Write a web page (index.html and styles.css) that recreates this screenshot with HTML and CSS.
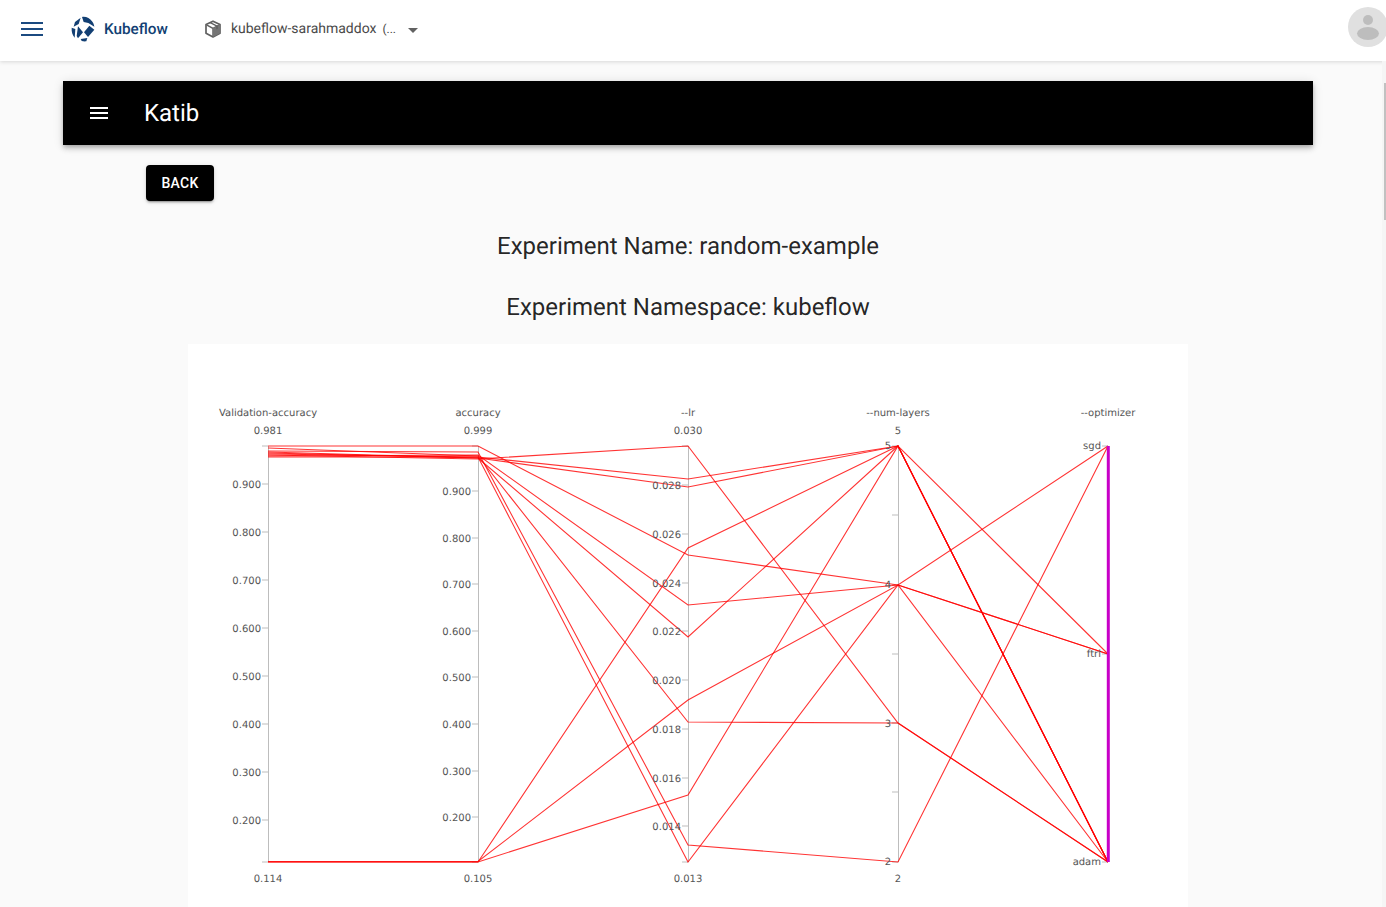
FILE: index.html
```html
<!DOCTYPE html>
<html lang="en">

<head>
    <meta charset="UTF-8">
    <title>Katib</title>
    <link rel="stylesheet" href="styles.css">
</head>

<body>
    <header class="topbar">
        <svg class="menuIcon" width="22" height="16" viewBox="0 0 22 16">
            <path d="M0 1h22v2H0zM0 7h22v2H0zM0 13h22v2H0z" fill="#1b4a80"/>
        </svg>
        <div class="brand">
            <svg class="logo" width="30" height="30" viewBox="0 0 90 90">
                <path d="M21 24L38 11 32 30 17 38z" fill="#123f73"/>
                <path d="M42 9C54 7 66 13 72 22 76 27 78 32 79 38L61 27 47 24z" fill="#123f73"/>
                <path d="M11 41L22 45 20 71C13 63 10 52 11 41z" fill="#123f73"/>
                <path d="M30 37L45 55 30 73 26 66z" fill="#123f73"/>
                <path d="M48 55L64 35 79 47 60 69z" fill="#123f73"/>
                <path d="M38 75L58 72 55 82C50 83 45 82 41 81z" fill="#123f73"/>
            </svg>
            <span class="brandName">Kubeflow</span>
        </div>
        <div class="namespace">
            <svg class="boxIcon" width="18" height="18" viewBox="0 0 18 18">
                <path d="M9 1.200l7 3.200v8.800l-7 3.800-7-3.800V4.400z" fill="#fff" stroke="#616161" stroke-width="1.700" stroke-linejoin="round"/>
                <path d="M2.500 4.900L9 8.300l6.500-3.400M9 8.300v8" fill="none" stroke="#616161" stroke-width="1.500"/>
                <path d="M9 8.300l7-3.900v8.800l-7 3.800z" fill="#757575"/>
                <path d="M5.500 3l6.800 3.600v3l1.500-.8V5.800L7 2.300z" fill="#616161"/>
            </svg>
            <span class="nsName">kubeflow-sarahmaddox</span>
            <span class="nsOwner">(...</span>
            <span class="caret"></span>
        </div>
        <div class="avatar">
            <span class="avatarHead"></span>
            <span class="avatarBody"></span>
        </div>
    </header>

    <main class="page">
        <div class="katibBar">
            <svg class="katibMenu" width="18" height="12" viewBox="0 0 18 12">
                <path d="M0 0h18v2H0zM0 5h18v2H0zM0 10h18v2H0z" fill="#fff"/>
            </svg>
            <span class="katibTitle">Katib</span>
        </div>
        <button class="backBtn">BACK</button>
        <h5 class="expTitle">Experiment Name: random-example</h5>
        <h5 class="expTitle">Experiment Namespace: kubeflow</h5>

        <section class="chartBox">
            <svg class="chart" width="1000" height="563" viewBox="188 344 1000 563">
                <!-- axes -->
                <g class="axis">
                    <path d="M268.500 446V862M478.500 446V862M688.500 446V862M898.500 446V862"/>
                    <path d="M262 446h6M262 484h6M262 532h6M262 580h6M262 628h6M262 676h6M262 724h6M262 772h6M262 820h6M262 862h6"/>
                    <path d="M472 446h6M472 491h6M472 538h6M472 584h6M472 631h6M472 677h6M472 724h6M472 771h6M472 817h6M472 862h6"/>
                    <path d="M682 446h6M682 485h6M682 534h6M682 583h6M682 631h6M682 680h6M682 729h6M682 778h6M682 826h6M682 862h6"/>
                    <path d="M892 446h6M892 515h6M892 585h6M892 654h6M892 723h6M892 792h6M892 862h6"/>
                    <path d="M1102 446h6M1102 654h6M1102 862h6"/>
                </g>

                <!-- trials -->
                <g class="trials">
                    <polyline points="268,455 478,459 688,446 898,723 1108,862"/>
                    <polyline points="268,457 478,457 688,479 898,446 1108,654"/>
                    <polyline points="268,453 478,458 688,487 898,446 1108,862"/>
                    <polyline points="268,446 478,446 688,555 898,585 1108,654"/>
                    <polyline points="268,456 478,455 688,605 898,585 1108,446"/>
                    <polyline points="268,452 478,458 688,637 898,446 1108,862"/>
                    <polyline points="268,448 478,456 688,722 898,723 1108,862"/>
                    <polyline points="268,451 478,452 688,845 898,862 1108,446"/>
                    <polyline points="268,454 478,457 688,862 898,585 1108,862"/>
                    <polyline points="268,862 478,862 688,548 898,446 1108,862"/>
                    <polyline points="268,861.500 478,861.500 688,700 898,585 1108,654"/>
                    <polyline points="268,862 478,862 688,795 898,446 1108,862"/>
                </g>
                <line class="highlight" x1="1108.300" y1="446" x2="1108.300" y2="862"/>

                <!-- axis titles and ranges -->
                <g class="axisText middle">
                    <text x="268" y="416">Validation-accuracy</text>
                    <text x="478" y="416">accuracy</text>
                    <text x="688" y="416">--lr</text>
                    <text x="898" y="416">--num-layers</text>
                    <text x="1108" y="416">--optimizer</text>
                    <text x="268" y="434">0.981</text>
                    <text x="478" y="434">0.999</text>
                    <text x="688" y="434">0.030</text>
                    <text x="898" y="434">5</text>
                    <text x="268" y="882">0.114</text>
                    <text x="478" y="882">0.105</text>
                    <text x="688" y="882">0.013</text>
                    <text x="898" y="882">2</text>
                </g>

                <!-- tick labels -->
                <g class="axisText end">
                    <text x="261" y="488">0.900</text>
                    <text x="261" y="536">0.800</text>
                    <text x="261" y="584">0.700</text>
                    <text x="261" y="632">0.600</text>
                    <text x="261" y="680">0.500</text>
                    <text x="261" y="728">0.400</text>
                    <text x="261" y="776">0.300</text>
                    <text x="261" y="824">0.200</text>

                    <text x="471" y="495">0.900</text>
                    <text x="471" y="542">0.800</text>
                    <text x="471" y="588">0.700</text>
                    <text x="471" y="635">0.600</text>
                    <text x="471" y="681">0.500</text>
                    <text x="471" y="728">0.400</text>
                    <text x="471" y="775">0.300</text>
                    <text x="471" y="821">0.200</text>

                    <text x="681" y="489">0.028</text>
                    <text x="681" y="538">0.026</text>
                    <text x="681" y="587">0.024</text>
                    <text x="681" y="635">0.022</text>
                    <text x="681" y="684">0.020</text>
                    <text x="681" y="733">0.018</text>
                    <text x="681" y="782">0.016</text>
                    <text x="681" y="830">0.014</text>

                    <text x="891" y="449">5</text>
                    <text x="891" y="588">4</text>
                    <text x="891" y="727">3</text>
                    <text x="891" y="865">2</text>

                    <text x="1101" y="449">sgd</text>
                    <text x="1101" y="657">ftrl</text>
                    <text x="1101" y="865">adam</text>
                </g>
            </svg>
        </section>
    </main>

    <div class="scrollTrack">
        <div class="scrollThumb"></div>
    </div>
</body>

</html>
```

FILE: styles.css
```css
* {
    margin: 0;
    padding: 0;
    box-sizing: border-box;
}

html,
body {
    height: 100%;
    overflow: hidden;
}

body {
    background-color: #fafafa;
    font-family: Roboto, "Noto Sans", sans-serif;
    text-rendering: geometricPrecision;
    position: relative;
}

.topbar {
    height: 61px;
    background-color: #fff;
    box-shadow: 0 1px 4px rgba(0, 0, 0, .14);
    display: flex;
    align-items: center;
    padding: 0 0 3px 21px;
    position: relative;
    overflow: hidden;
}

.menuIcon {
    flex: none;
}

.brand {
    display: flex;
    align-items: center;
    margin-left: 25px;
}

.logo {
    flex: none;
}

.brandName {
    margin-left: 6px;
    font-size: 15.300px;
    font-weight: 500;
    color: #123f73;
}

.namespace {
    display: flex;
    align-items: center;
    margin-left: 36px;
    color: #4a4a4a;
    font-size: 14px;
}

.boxIcon {
    flex: none;
}

.nsName {
    margin-left: 9px;
}

.nsOwner {
    margin-left: 6px;
    font-size: 12px;
}

.caret {
    width: 0;
    height: 0;
    margin-left: 12px;
    margin-top: 2px;
    border-left: 5px solid transparent;
    border-right: 5px solid transparent;
    border-top: 5px solid #616161;
}

.avatar {
    position: absolute;
    left: 1348px;
    top: 7px;
    width: 40px;
    height: 40px;
    border-radius: 50%;
    background-color: #e0e0e0;
    overflow: hidden;
}

.avatarHead {
    position: absolute;
    left: 15px;
    top: 8px;
    width: 10px;
    height: 10px;
    border-radius: 50%;
    background-color: #bdbdbd;
}

.avatarBody {
    position: absolute;
    left: 9px;
    top: 20px;
    width: 22px;
    height: 13px;
    border-radius: 50%;
    background-color: #bdbdbd;
}

.page {
    width: 1250px;
    margin-left: 63px;
    padding-top: 20px;
}

.katibBar {
    height: 64px;
    background-color: #000;
    color: #fff;
    display: flex;
    align-items: center;
    padding-left: 27px;
    box-shadow: 0 2px 4px -1px rgba(0, 0, 0, .2), 0 4px 5px 0 rgba(0, 0, 0, .14), 0 1px 10px 0 rgba(0, 0, 0, .12);
}

.katibTitle {
    margin-left: 36px;
    font-size: 24px;
}

.backBtn {
    display: block;
    width: 68px;
    height: 36px;
    margin: 20px 0 0 83px;
    border: none;
    border-radius: 4px;
    background-color: #000;
    color: #fff;
    font-family: Roboto, sans-serif;
    font-size: 14px;
    font-weight: 500;
    letter-spacing: .3px;
    box-shadow: 0 3px 1px -2px rgba(0, 0, 0, .2), 0 2px 2px 0 rgba(0, 0, 0, .14), 0 1px 5px 0 rgba(0, 0, 0, .12);
}

.expTitle {
    margin-top: 29px;
    font-size: 24px;
    font-weight: 400;
    line-height: 32px;
    text-align: center;
    color: rgba(0, 0, 0, .87);
}

.chartBox {
    width: 1000px;
    margin: 21px auto 0;
    background-color: #fff;
}

.chart {
    display: block;
}

.axis path {
    fill: none;
    stroke: #bdbdbd;
    stroke-width: 1;
}

.trials polyline {
    fill: none;
    stroke: #f00;
    stroke-opacity: .8;
    stroke-width: 1.100;
}

.highlight {
    stroke: #c800c8;
    stroke-width: 3;
}

.axisText text {
    font-family: "DejaVu Sans", Verdana, sans-serif;
    font-size: 10px;
    fill: #555;
}

.middle text {
    text-anchor: middle;
}

.end text {
    text-anchor: end;
}

.scrollTrack {
    position: absolute;
    top: 61px;
    right: 0;
    bottom: 0;
    width: 4px;
    background-color: #f5f5f5;
}

.scrollThumb {
    margin: 22px 0 0 2px;
    height: 137px;
    background-color: #c1c1c1;
}
```
